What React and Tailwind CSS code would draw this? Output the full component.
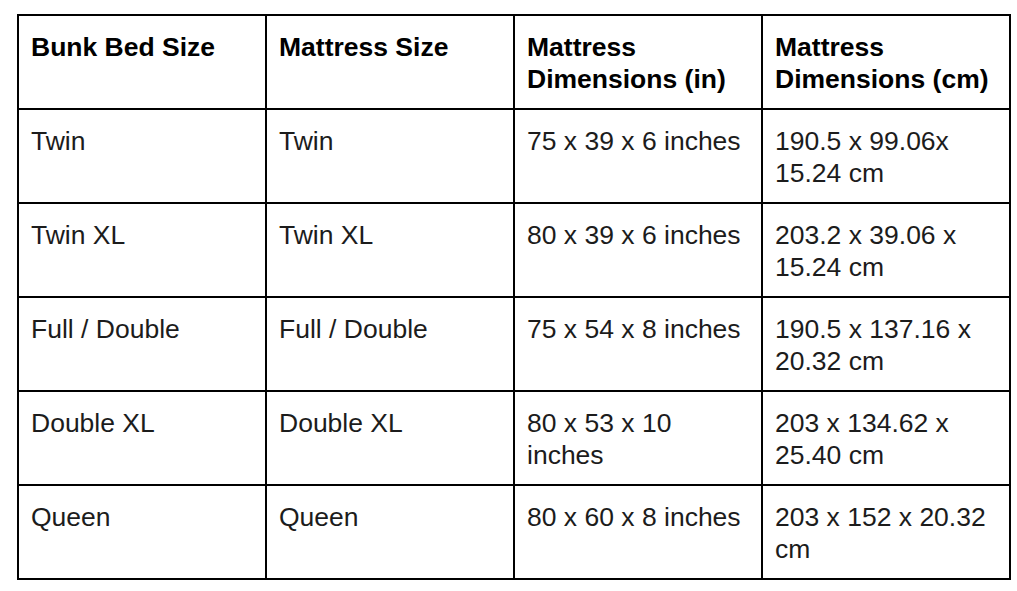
export default function App() {
  const head = ["Bunk Bed Size", "Mattress Size", "Mattress Dimensions (in)", "Mattress Dimensions (cm)"];
  const rows = [
    ["Twin", "Twin", "75 x 39 x 6 inches", "190.5 x 99.06x 15.24 cm"],
    ["Twin XL", "Twin XL", "80 x 39 x 6 inches", "203.2 x 39.06 x 15.24 cm"],
    ["Full / Double", "Full / Double", "75 x 54 x 8 inches", "190.5 x 137.16 x 20.32 cm"],
    ["Double XL", "Double XL", "80 x 53 x 10 inches", "203 x 134.62 x 25.40 cm"],
    ["Queen", "Queen", "80 x 60 x 8 inches", "203 x 152 x 20.32 cm"],
  ];

  return (
    <div className="w-[1017px] h-[591px] bg-white overflow-hidden pt-[14px] pl-[17px] font-['Liberation_Sans',Arial,sans-serif] text-[26.5px] leading-[32px]">
      <div className="grid grid-cols-[repeat(4,248px)] w-[994px] border-l-2 border-t-2 border-black">
        {head.map((h) => (
          <div key={h} className="h-[94px] border-r-2 border-b-2 border-black pl-3 pr-4 pt-[15px] font-bold text-black">
            {h}
          </div>
        ))}
        {rows.map((r, i) =>
          r.map((c, j) => (
            <div key={i + "-" + j} className="h-[94px] border-r-2 border-b-2 border-black pl-3 pr-4 pt-[15px] text-[#1c1c1c]">
              {c}
            </div>
          ))
        )}
      </div>
    </div>
  );
}
